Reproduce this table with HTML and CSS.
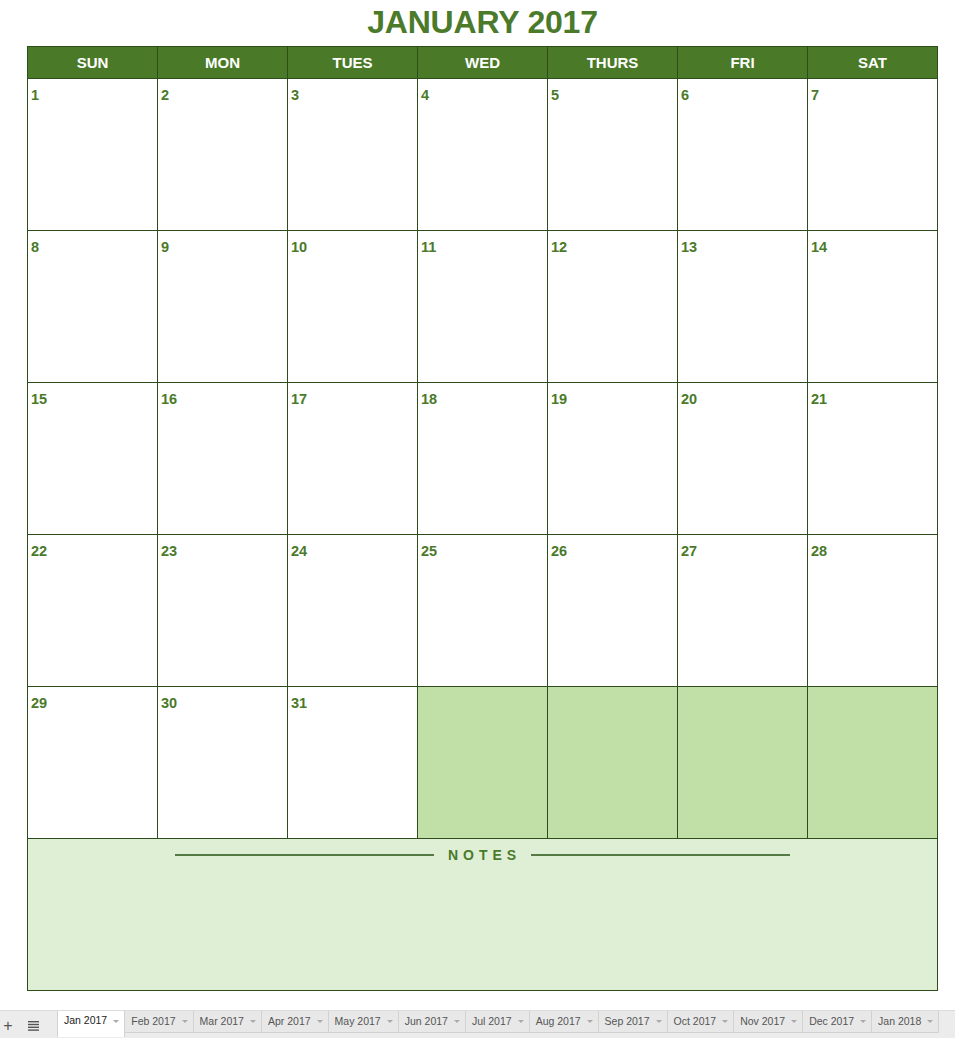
FILE: index.html
```html
<!DOCTYPE html>
<html>
<head>
<meta charset="utf-8">
<link rel="stylesheet" href="styles.css">
</head>
<body>
<div class="page">
  <h1 class="title">JANUARY 2017</h1>
  <div class="cal">
    <div class="hd">SUN</div><div class="hd">MON</div><div class="hd">TUES</div><div class="hd">WED</div><div class="hd">THURS</div><div class="hd">FRI</div><div class="hd">SAT</div>
    <div class="day">1</div><div class="day">2</div><div class="day">3</div><div class="day">4</div><div class="day">5</div><div class="day">6</div><div class="day">7</div>
    <div class="day">8</div><div class="day">9</div><div class="day">10</div><div class="day">11</div><div class="day">12</div><div class="day">13</div><div class="day">14</div>
    <div class="day">15</div><div class="day">16</div><div class="day">17</div><div class="day">18</div><div class="day">19</div><div class="day">20</div><div class="day">21</div>
    <div class="day">22</div><div class="day">23</div><div class="day">24</div><div class="day">25</div><div class="day">26</div><div class="day">27</div><div class="day">28</div>
    <div class="day">29</div><div class="day">30</div><div class="day">31</div><div class="day empty"></div><div class="day empty"></div><div class="day empty"></div><div class="day empty"></div>
    <div class="notes">
      <div class="notes-head"><span class="rule"></span><span class="notes-label">NOTES</span><span class="rule"></span></div>
    </div>
  </div>
</div>
<div class="tabbar">
  <span class="tool plus">+</span>
  <span class="tool menu"><svg width="11" height="10" viewBox="0 0 11 10"><g fill="#555"><rect x="0" y="0" width="11" height="1.4"/><rect x="0" y="2.8" width="11" height="1.4"/><rect x="0" y="5.6" width="11" height="1.4"/><rect x="0" y="8.4" width="11" height="1.4"/></g></svg></span>
  <div class="tabs">
    <div class="tab active">Jan 2017<span class="arr"></span></div>
    <div class="tab">Feb 2017<span class="arr"></span></div>
    <div class="tab">Mar 2017<span class="arr"></span></div>
    <div class="tab">Apr 2017<span class="arr"></span></div>
    <div class="tab">May 2017<span class="arr"></span></div>
    <div class="tab">Jun 2017<span class="arr"></span></div>
    <div class="tab">Jul 2017<span class="arr"></span></div>
    <div class="tab">Aug 2017<span class="arr"></span></div>
    <div class="tab">Sep 2017<span class="arr"></span></div>
    <div class="tab">Oct 2017<span class="arr"></span></div>
    <div class="tab">Nov 2017<span class="arr"></span></div>
    <div class="tab">Dec 2017<span class="arr"></span></div>
    <div class="tab">Jan 2018<span class="arr"></span></div>
  </div>
</div>
</body>
</html>
```
FILE: styles.css
```css
html, body {
  margin: 0;
  padding: 0;
  background: #ffffff;
  font-family: "Liberation Sans", Arial, sans-serif;
}
.page {
  width: 955px;
  height: 1010px;
  padding-left: 27px;
  box-sizing: border-box;
}
.title {
  margin: 0;
  width: 911px;
  height: 46px;
  line-height: 44px;
  text-align: center;
  font-size: 32px;
  font-weight: bold;
  color: #4a7a2a;
  letter-spacing: -0.2px;
}
.cal {
  display: grid;
  grid-template-columns: repeat(7, 130px);
  grid-template-rows: 32px repeat(5, 152px) 152px;
  width: 911px;
  box-sizing: border-box;
  border-left: 1px solid #2e4d1c;
  border-top: 1px solid #2e4d1c;
}
.hd, .day, .notes {
  box-sizing: border-box;
  border-right: 1px solid #2e4d1c;
  border-bottom: 1px solid #2e4d1c;
}
.hd {
  background: #4a7a28;
  color: #ffffff;
  font-weight: bold;
  font-size: 15px;
  display: flex;
  align-items: center;
  justify-content: center;
}
.day {
  background: #ffffff;
  color: #4a7a2a;
  font-weight: bold;
  font-size: 14.5px;
  padding: 8px 0 0 3px;
}
.day.empty {
  background: #c0e0a8;
}
.notes {
  grid-column: 1 / span 7;
  background: #dfefd5;
}
.notes-head {
  display: flex;
  align-items: center;
  justify-content: center;
  height: 16px;
  margin-top: 8px;
}
.rule {
  width: 259px;
  height: 2px;
  background: #557a43;
}
.notes-label {
  font-weight: bold;
  font-size: 14px;
  color: #4a7a2a;
  letter-spacing: 5px;
  margin: 0 10px 0 14px;
}
.tabbar {
  height: 28px;
  display: flex;
  align-items: stretch;
  background: #ececec;
  border-top: 1px solid #dcdcdc;
  box-sizing: border-box;
  font-size: 10.5px;
  color: #444;
  overflow: hidden;
}
.tool {
  flex: none;
  display: flex;
  align-items: center;
  justify-content: center;
  color: #555;
}
.plus {
  width: 16px;
  font-size: 16px;
  padding-top: 2px;
}
.menu {
  width: 34px;
  padding-top: 3px;
}
.tabs {
  flex: none;
  display: flex;
  height: 23px;
  margin-top: -1px;
  margin-left: 7px;
}
.tab {
  flex: none;
  display: flex;
  align-items: center;
  padding: 0 5px 0 6px;
  border-right: 1px solid #d2d2d2;
  border-bottom: 1px solid #d2d2d2;
  background: #e8e8e8;
  white-space: nowrap;
  color: #555;
}
.tab.active {
  background: #ffffff;
  color: #222;
  height: 27px;
  border-bottom: none;
  border-left: 1px solid #d2d2d2;
  border-right: 1px solid #d2d2d2;
  align-items: flex-start;
  padding-top: 4px;
  box-sizing: border-box;
}
.arr {
  width: 0;
  height: 0;
  margin-left: 6px;
  border-left: 3px solid transparent;
  border-right: 3px solid transparent;
  border-top: 3px solid #aaa;
}
.tab.active .arr {
  margin-top: 6px;
}
```
